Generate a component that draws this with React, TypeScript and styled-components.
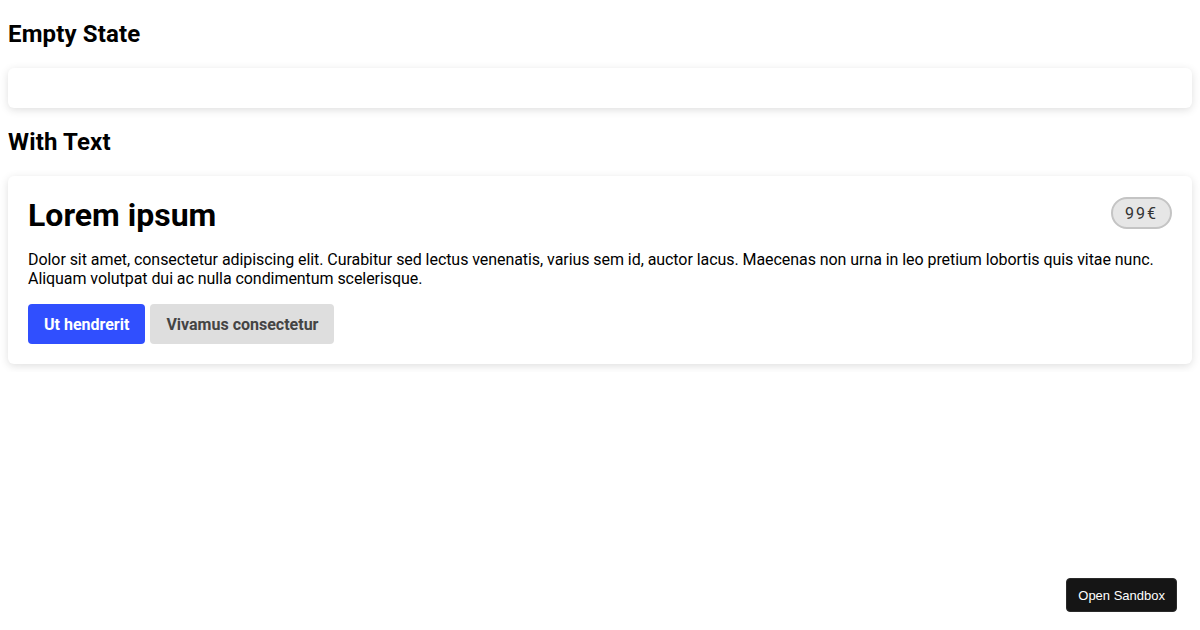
import React from "react";
import styled, { createGlobalStyle } from "styled-components";

const Global = createGlobalStyle`
  html, body {
    margin: 0;
    padding: 0;
  }
  body {
    font-family: Roboto, "Liberation Sans", sans-serif;
    color: #000;
    background: #fff;
  }
`;

const Page = styled.div`
  padding: 20px 8px 8px;
`;

const SectionTitle = styled.h2`
  font-size: 24px;
  font-weight: 700;
  margin: 20px 0;
  line-height: 28px;
  letter-spacing: 0.15px;
  &:first-child {
    margin-top: 0;
  }
`;

const Card = styled.div`
  background: #fff;
  border-radius: 6px;
  box-shadow: 0 2px 8px rgba(0, 0, 0, 0.13);
  padding: 20px;
`;

const CardHeader = styled.div`
  display: flex;
  justify-content: space-between;
  align-items: flex-start;
`;

const CardTitle = styled.h1`
  margin: 0;
  font-size: 32px;
  font-weight: 700;
  line-height: 38px;
`;

const Badge = styled.span`
  display: inline-flex;
  align-items: center;
  justify-content: center;
  height: 28px;
  padding: 0 12px;
  border: 2px solid #c4c4c4;
  border-radius: 16px;
  background: #e6e6e6;
  color: #333;
  font-size: 16px;
  letter-spacing: 2px;
  margin-top: 1px;
`;

const Text = styled.p`
  margin: 16px 0;
  font-size: 16px;
  line-height: 19px;
  letter-spacing: -0.06px;
`;

const Actions = styled.div`
  display: flex;
  gap: 5px;
`;

const Button = styled.button<{ $primary?: boolean }>`
  height: 40px;
  padding: 0 16px;
  border: none;
  border-radius: 4px;
  font-family: Roboto, "Liberation Sans", sans-serif;
  font-size: 16px;
  font-weight: 700;
  cursor: pointer;
  background: ${(p) => (p.$primary ? "#304ffe" : "#dedede")};
  color: ${(p) => (p.$primary ? "#fff" : "#444")};
`;

const SandboxButton = styled.button`
  position: fixed;
  right: 23px;
  bottom: 18px;
  height: 34px;
  padding: 0 11px;
  border: 1px solid #2a2a2a;
  border-radius: 4px;
  background: #151515;
  color: #fff;
  font-family: "Liberation Sans", Arial, sans-serif;
  font-size: 13px;
`;

export default function App() {
  return (
    <>
      <Global />
      <Page>
        <SectionTitle>Empty State</SectionTitle>
        <Card />
        <SectionTitle>With Text</SectionTitle>
        <Card>
          <CardHeader>
            <CardTitle>Lorem ipsum</CardTitle>
            <Badge>99€</Badge>
          </CardHeader>
          <Text>
            Dolor sit amet, consectetur adipiscing elit. Curabitur sed lectus venenatis, varius sem id, auctor lacus. Maecenas non urna in leo pretium lobortis quis vitae nunc. Aliquam volutpat dui ac nulla condimentum scelerisque.
          </Text>
          <Actions>
            <Button $primary>Ut hendrerit</Button>
            <Button>Vivamus consectetur</Button>
          </Actions>
        </Card>
      </Page>
      <SandboxButton>Open Sandbox</SandboxButton>
    </>
  );
}
